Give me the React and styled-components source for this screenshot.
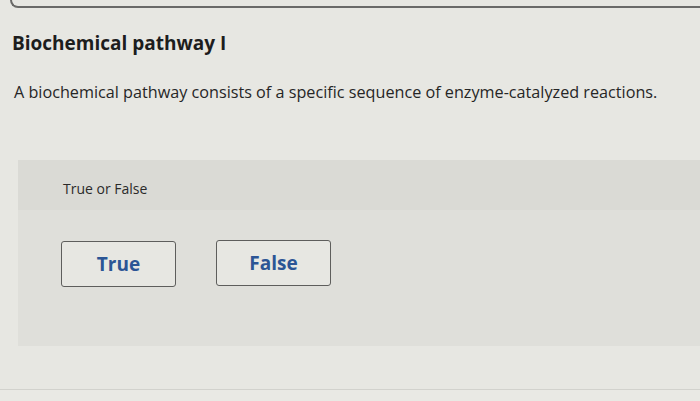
import styled, { createGlobalStyle } from 'styled-components'

const Global = createGlobalStyle`
  html, body {
    margin: 0;
    padding: 0;
    background: #e7e7e2;
  }
  body {
    font-family: "Open Sans", Lato, sans-serif;
    color: #222;
  }
`

const Page = styled.div`
  width: 700px;
  height: 401px;
  overflow: hidden;
  display: flex;
  flex-direction: column;
`

const TopFrame = styled.div`
  height: 6px;
  margin-left: 10px;
  border: 2px solid #6a6a68;
  border-top: none;
  border-right: none;
  border-radius: 0 0 0 9px;
`

const Title = styled.h1`
  margin: 23px 0 0 12px;
  font-size: 19px;
  font-weight: 700;
  line-height: 24px;
  color: #1d1d1d;
`

const Prompt = styled.p`
  margin: 27px 0 0 14px;
  font-size: 16.2px;
  line-height: 20px;
  color: #262626;
`

const Panel = styled.section`
  margin: 58px 0 0 18px;
  height: 186px;
  background: #dfdfda;
  display: flex;
  flex-direction: column;
`

const PanelHead = styled.div`
  height: 50px;
  background: #dadad5;
  padding: 20px 0 0 45px;
  box-sizing: border-box;
  font-size: 14px;
  line-height: 17px;
  color: #2a2a2a;
`

const Choices = styled.div`
  display: flex;
  gap: 40px;
  padding: 30px 0 0 43px;
`

const Choice = styled.button`
  width: 115px;
  height: 46px;
  border: 1px solid #5e5e5c;
  border-radius: 3px;
  background: #e7e7e2;
  font-family: "Open Sans", Lato, sans-serif;
  font-size: 19px;
  font-weight: 700;
  color: #2b5595;
  margin-top: ${p => p.$offset || 0}px;
`

const Footer = styled.div`
  margin-top: 43px;
  border-top: 1px solid #d2d2cd;
  flex: 1;
  background: #e9e9e4;
`

export default function App() {
  return (
    <Page>
      <Global />
      <TopFrame />
      <Title>Biochemical pathway I</Title>
      <Prompt>A biochemical pathway consists of a specific sequence of enzyme-catalyzed reactions.</Prompt>
      <Panel>
        <PanelHead>True or False</PanelHead>
        <Choices>
          <Choice $offset={1}>True</Choice>
          <Choice>False</Choice>
        </Choices>
      </Panel>
      <Footer />
    </Page>
  )
}
